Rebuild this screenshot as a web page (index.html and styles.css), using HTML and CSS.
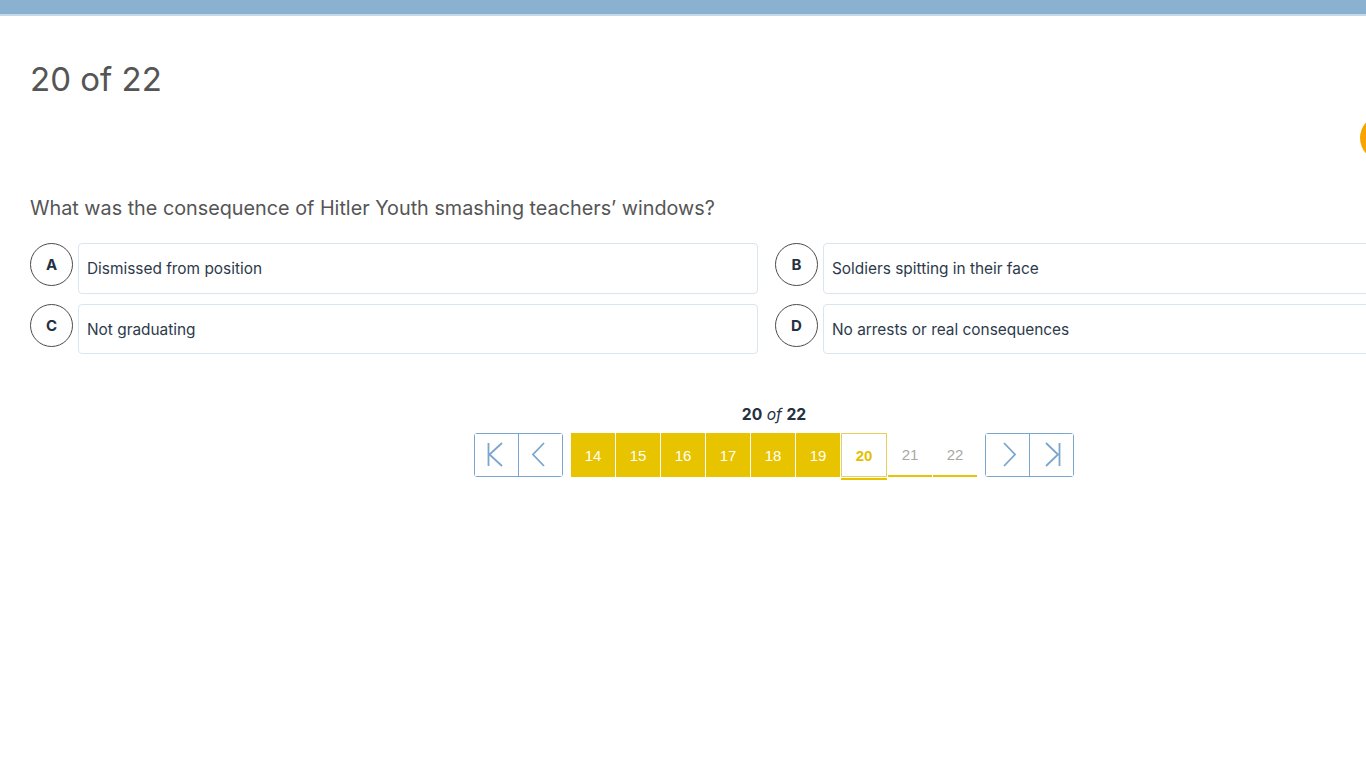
FILE: index.html
```html
<!DOCTYPE html>
<html lang="en">
<head>
<meta charset="utf-8">
<title>Quiz</title>
<link rel="stylesheet" href="styles.css">
</head>
<body>
<div class="topbar"></div>
<div class="orb"></div>
<main class="main">
  <h1 class="counter">20 of 22</h1>
  <p class="question">What was the consequence of Hitler Youth smashing teachers’ windows?</p>
  <div class="options">
    <div class="option"><span class="letter">A</span><div class="answer">Dismissed from position</div></div>
    <div class="option"><span class="letter">B</span><div class="answer">Soldiers spitting in their face</div></div>
    <div class="option"><span class="letter">C</span><div class="answer">Not graduating</div></div>
    <div class="option"><span class="letter">D</span><div class="answer">No arrests or real consequences</div></div>
  </div>
  <div class="pager">
    <div class="pager-label"><b>20</b> <i>of</i> <b>22</b></div>
    <div class="pager-row">
      <div class="pg-group">
        <button class="pg-btn" aria-label="First"><svg width="43" height="42" viewBox="0 0 43 42"><path d="M13.5 9V32M27 9L14.5 20.5L27 32" fill="none" stroke="#7aa5cc" stroke-width="1.8"/></svg></button>
        <button class="pg-btn" aria-label="Previous"><svg width="43" height="42" viewBox="0 0 43 42"><path d="M25 9L14 20.5L25 32" fill="none" stroke="#7aa5cc" stroke-width="1.8"/></svg></button>
      </div>
      <ul class="pages">
        <li class="page done">14</li>
        <li class="page done">15</li>
        <li class="page done">16</li>
        <li class="page done">17</li>
        <li class="page done">18</li>
        <li class="page done">19</li>
        <li class="page current">20</li>
        <li class="page todo">21</li>
        <li class="page todo">22</li>
      </ul>
      <div class="pg-group">
        <button class="pg-btn" aria-label="Next"><svg width="43" height="42" viewBox="0 0 43 42"><path d="M18 9L29 20.5L18 32" fill="none" stroke="#7aa5cc" stroke-width="1.8"/></svg></button>
        <button class="pg-btn" aria-label="Last"><svg width="43" height="42" viewBox="0 0 43 42"><path d="M16 9L28 20.5L16 32M29.5 9V32" fill="none" stroke="#7aa5cc" stroke-width="1.8"/></svg></button>
      </div>
    </div>
  </div>
</main>
</body>
</html>
```

FILE: styles.css
```css
html, body {
  margin: 0;
  padding: 0;
  overflow: hidden;
  background: #ffffff;
}
body {
  font-family: Inter, "Noto Sans", sans-serif;
  color: #555555;
  width: 1366px;
  height: 768px;
  position: relative;
}
.topbar {
  height: 14px;
  background: #8bb1d1;
  border-bottom: 2px solid #c6d8e8;
}
.orb {
  position: absolute;
  left: 1360px;
  top: 115px;
  width: 46px;
  height: 46px;
  border-radius: 50%;
  background: #f7a400;
}
.main {
  width: 1488px;
  padding: 0 30px;
}
.counter {
  margin: 43px 0 0;
  font-size: 33px;
  line-height: 40px;
  font-weight: 400;
  color: #555555;
}
.question {
  margin: 96px 0 0;
  font-size: 19.8px;
  line-height: 24px;
  color: #555555;
  position: relative;
  top: 1px;
}
.options {
  margin-top: 24px;
  display: grid;
  grid-template-columns: 728px 728px;
  column-gap: 17px;
  row-gap: 10px;
}
.option {
  display: flex;
  align-items: flex-start;
  gap: 5px;
}
.letter {
  flex: none;
  width: 41px;
  height: 41px;
  border: 1px solid #4a4a4a;
  border-radius: 50%;
  display: flex;
  align-items: center;
  justify-content: center;
  font-size: 15px;
  font-weight: 700;
  color: #25313f;
}
.answer {
  flex: 1;
  height: 49px;
  border: 1px solid #dae5ef;
  border-radius: 4px;
  display: flex;
  align-items: center;
  padding-left: 8px;
  font-size: 15.4px;
  color: #2c3a4b;
}
.option:nth-child(n+3) .answer {
  height: 48px;
}
.pager {
  margin-top: 52px;
  display: flex;
  flex-direction: column;
  align-items: center;
}
.pager-label {
  font-size: 15.7px;
  line-height: 18px;
  color: #25313f;
}
.pager-label b { font-weight: 700; }
.pager-label i { font-weight: 400; }
.pager-row {
  margin-top: 9px;
  display: flex;
  gap: 8px;
}
.pg-group {
  display: flex;
  border: 1px solid #7aa5cc;
  border-radius: 3px;
}
.pg-btn {
  width: 43px;
  height: 42px;
  padding: 0;
  margin: 0;
  border: 0;
  background: #ffffff;
  display: block;
}
.pg-btn + .pg-btn {
  width: 44px;
  border-left: 1px solid #7aa5cc;
}
.pg-btn svg { display: block; }
.pages {
  list-style: none;
  margin: 0;
  padding: 0;
  width: 406px;
  display: flex;
  gap: 1px;
}
.page {
  flex: 1;
  height: 44px;
  box-sizing: border-box;
  display: flex;
  align-items: center;
  justify-content: center;
  font-family: "Liberation Sans", Arial, sans-serif;
  font-size: 15px;
}
.page.done {
  background: #e7c300;
  color: #ffffff;
}
.page.current {
  position: relative;
  border: 1px solid #ead05a;
  color: #e4bf00;
  font-weight: 700;
}
.page.current::after {
  content: "";
  position: absolute;
  left: -1px;
  right: -1px;
  bottom: -4px;
  height: 2px;
  background: #e7c300;
}
.page.todo {
  color: #a8a8a8;
  border-bottom: 2px solid #e7c300;
  padding-top: 1px;
}
```
